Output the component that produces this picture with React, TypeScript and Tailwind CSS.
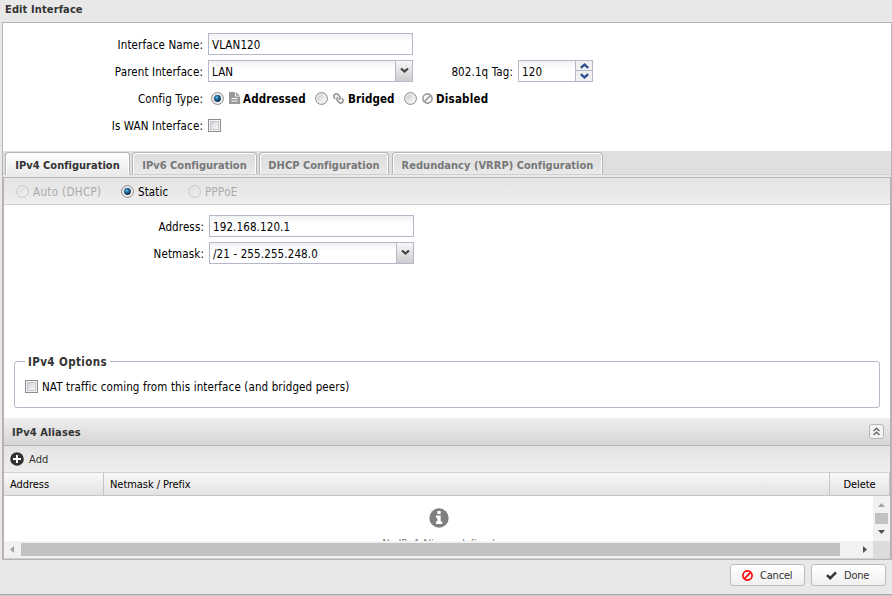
import type { ReactNode } from 'react';
import { FaLink } from 'react-icons/fa';

function Label({ children, width = 'w-[203px]' }: { children: ReactNode; width?: string }) {
  return <span className={`${width} shrink-0 pt-[2px] text-right whitespace-nowrap`}>{children}</span>;
}

function FileIcon() {
  return (
    <svg width="11" height="12" viewBox="0 0 11 12" className="mr-[3px] ml-[5px] shrink-0">
      <path d="M0 0H6V4.5H11V12H0Z" fill="#999" />
      <path d="M7 0 11 3.7H7Z" fill="#999" />
      <path d="M2.5 6.5H8.5M2.5 9H8.5" stroke="#fff" strokeWidth="1" />
    </svg>
  );
}

function BanIcon({ className }: { className: string }) {
  return (
    <svg width="11" height="11" viewBox="0 0 11 11" className={`shrink-0 ${className}`}>
      <circle cx="5.5" cy="5.5" r="4.6" fill="none" stroke="currentColor" strokeWidth="1.6" />
      <path d="M2.4 8.6 8.6 2.4" stroke="currentColor" strokeWidth="1.6" />
    </svg>
  );
}

function Radio({ checked, disabled }: { checked?: boolean; disabled?: boolean }) {
  return (
    <svg width="13" height="13" viewBox="0 0 13 13" className={`shrink-0 ${disabled ? 'opacity-35' : ''}`}>
      <defs>
        <linearGradient id="well" x1="0" y1="0" x2="1" y2="1">
          <stop offset="0" stopColor="#c4c8cc" />
          <stop offset="1" stopColor="#ffffff" />
        </linearGradient>
        <radialGradient id="dot" cx="0.4" cy="0.35" r="0.65">
          <stop offset="0" stopColor="#5fc4ee" />
          <stop offset="0.5" stopColor="#17608f" />
          <stop offset="1" stopColor="#0b2545" />
        </radialGradient>
      </defs>
      <circle cx="6.5" cy="6.5" r="5.9" fill="#f4f4f4" stroke="#858585" strokeWidth="1" />
      <circle cx="6.5" cy="6.5" r="4.3" fill="url(#well)" />
      {checked && <circle cx="6.5" cy="6.5" r="3.4" fill="url(#dot)" />}
    </svg>
  );
}

function Checkbox() {
  return (
    <span className="flex size-[13px] shrink-0 border border-[#8a8c8e] bg-[#f4f4f4] p-px">
      <span className="flex-1 border border-[#c5c8cd] bg-linear-to-br from-[#cfd2d8] to-[#f8f8f8]" />
    </span>
  );
}

function TextField({ value }: { value: string }) {
  return (
    <div className="flex h-[22px] w-[205px] items-center border border-[#b5b8c8] bg-linear-to-b from-[#f0f1f1] via-white via-40% to-white px-[3px] pt-[2px]">
      {value}
    </div>
  );
}

function ComboBox({ value }: { value: string }) {
  return (
    <div className="flex h-[22px] w-[205px] border border-[#b5b8c8] bg-linear-to-b from-[#f0f1f1] via-white via-40% to-white">
      <span className="flex flex-1 items-center px-[3px] pt-[2px]">{value}</span>
      <span className="flex w-[17px] justify-center border-l border-[#b5b8c8] bg-linear-to-b from-[#f8f8f8] to-[#cdcdcd] pt-[6px]">
        <svg width="9" height="7" viewBox="0 0 9 7">
          <path d="M1 1.5 4.5 4.5 8 1.5" fill="none" stroke="#444" strokeWidth="2.3" />
        </svg>
      </span>
    </div>
  );
}

function Spinner({ value }: { value: string }) {
  return (
    <div className="flex h-[22px] w-[75px] border border-[#b5b8c8] bg-linear-to-b from-[#f0f1f1] via-white via-40% to-white">
      <span className="flex flex-1 items-center px-[3px] pt-[2px]">{value}</span>
      <span className="flex w-[17px] flex-col border-l border-[#b5b8c8] bg-[#f0f0f0]">
        <span className="flex h-[10px] items-center justify-center border-b border-[#b5b8c8]">
          <svg width="9" height="6" viewBox="0 0 9 6">
            <path d="M0.8 4.8 4.5 1.6 8.2 4.8" fill="none" stroke="#2c4f8f" strokeWidth="2.3" />
          </svg>
        </span>
        <span className="flex h-[10px] items-center justify-center">
          <svg width="9" height="6" viewBox="0 0 9 6">
            <path d="M0.8 1.2 4.5 4.4 8.2 1.2" fill="none" stroke="#2c4f8f" strokeWidth="2.3" />
          </svg>
        </span>
      </span>
    </div>
  );
}

const tabs = [
  { name: 'IPv4 Configuration', style: 'w-[125px]' },
  { name: 'IPv6 Configuration', style: 'w-[125px]' },
  { name: 'DHCP Configuration', style: 'w-[130px]' },
  { name: 'Redundancy (VRRP) Configuration', style: 'ml-px w-[211px]' },
];

export default function App() {
  return (
    <div className="flex h-[596px] w-[892px] flex-col overflow-hidden bg-[#e8e8e8] font-['DejaVu_Sans_Condensed','DejaVu_Sans',sans-serif] text-[11.5px] leading-[14px] tracking-[0.12px] text-black [font-stretch:condensed]">
      <header className="h-[22px] shrink-0 pt-[3px] pl-[5px] text-[11px] font-bold text-[#333]">Edit Interface</header>

      <main className="ml-[2px] flex h-[538px] w-[890px] shrink-0 flex-col border border-[#bcb0b0] bg-white">
        {/* Interface settings */}
        <section className="-ml-[3px] flex h-[128px] shrink-0 flex-col gap-[5px] pt-[10px]">
          <div className="flex h-[22px] items-center gap-[5px]">
            <Label>Interface Name:</Label>
            <TextField value="VLAN120" />
          </div>
          <div className="flex h-[22px] items-center gap-[5px]">
            <Label>Parent Interface:</Label>
            <ComboBox value="LAN" />
            <Label width="ml-[32px] w-[63px]">802.1q Tag:</Label>
            <Spinner value="120" />
          </div>
          <div className="flex h-[22px] items-center">
            <Label>Config Type:</Label>
            <div className="flex items-center pl-[8px] font-bold">
              <span className="flex w-[104px] items-center">
                <Radio checked />
                <FileIcon />
                <span className="pt-[2px]">Addressed</span>
              </span>
              <span className="flex w-[89px] items-center">
                <Radio />
                <FaLink className="mr-[4px] ml-[5px] -scale-x-100 text-[11px] text-[#999]" />
                <span className="pt-[2px]">Bridged</span>
              </span>
              <span className="flex items-center">
                <Radio />
                <BanIcon className="mr-[3px] ml-[5px] text-[#999]" />
                <span className="pt-[2px] tracking-[0.2px]">Disabled</span>
              </span>
            </div>
          </div>
          <div className="flex h-[22px] items-center gap-[5px]">
            <Label>Is WAN Interface:</Label>
            <Checkbox />
          </div>
        </section>

        {/* Tab strip */}
        <nav className="flex h-[24px] shrink-0 items-end gap-[2px] border-b border-[#d0d0d0] bg-[#dfdfdf] pl-[2px] text-[11px] font-bold tracking-[0.02px]">
          {tabs.map((tab, i) => (
            <div
              key={tab.name}
              className={`flex shrink-0 justify-center rounded-t-[4px] border border-b-0 border-[#b5b5b5] pt-[6px] whitespace-nowrap shadow-[inset_1px_1px_0_#fff,inset_-1px_0_0_#fff] ${tab.style} ${
                i === 0
                  ? 'z-10 -mb-px h-[23px] bg-linear-to-b from-white to-[#eaeaea] text-[#333]'
                  : 'h-[22px] bg-linear-to-b from-[#dcdcdc] to-[#eaeaea] text-[#777]'
              }`}
            >
              {tab.name}
            </div>
          ))}
        </nav>
        <div className="h-[2px] shrink-0 bg-[#eaeaea]" />

        <div className="flex h-[382px] shrink-0 flex-col border border-[#bcb0b0] border-b-[#d0d0d0]">
          <div className="flex h-[27px] shrink-0 items-center border-b border-[#d0d0d0] bg-linear-to-b from-[#e4e4e4] to-[#eeeeee] pl-[12px] text-[#aaa]">
            <span className="flex w-[105px] items-center gap-[4px]">
              <Radio disabled />
              <span className="pt-[2px] tracking-[0.35px]">Auto (DHCP)</span>
            </span>
            <span className="flex w-[67px] items-center gap-[4px] text-black">
              <Radio checked />
              <span className="pt-[2px]">Static</span>
            </span>
            <span className="flex items-center gap-[4px]">
              <Radio disabled />
              <span className="pt-[2px] tracking-[0.3px]">PPPoE</span>
            </span>
          </div>

          <section className="flex h-[156px] shrink-0 flex-col gap-[5px] pt-[10px]">
            <div className="flex items-center gap-[5px]">
              <Label width="w-[200px]">Address:</Label>
              <TextField value="192.168.120.1" />
            </div>
            <div className="flex items-center gap-[5px]">
              <Label width="w-[200px]">Netmask:</Label>
              <ComboBox value="/21 - 255.255.248.0" />
            </div>
          </section>

          <fieldset className="ml-[10px] h-[47px] w-[866px] shrink-0 rounded-[3px] border border-[#b5b8c8]">
            <legend className="ml-[10px] h-0 px-[3px] font-bold tracking-[0.4px] text-[#333]">
              <span className="-mt-[7px] block bg-white">IPv4 Options</span>
            </legend>
            <div className="mt-[18px] ml-[10px] flex h-[13px] items-center gap-[4px]">
              <Checkbox />
              <span>NAT traffic coming from this interface (and bridged peers)</span>
            </div>
          </fieldset>

          {/* Aliases grid */}
          <div className="mt-[10px] flex h-[28px] shrink-0 items-center justify-between border-b border-[#bcb0b0] bg-linear-to-b from-[#eeeeee] to-[#d6d6d6] pr-[6px] pl-[8px] text-[11px] font-bold text-[#333]">
            <span className="pt-[2px]">IPv4 Aliases</span>
            <span className="flex size-[15px] items-center justify-center rounded-[3px] border border-[#b5b5b5] bg-[#f4f4f4]">
              <svg width="9" height="9" viewBox="0 0 9 9">
                <path d="M1.5 4 4.5 1.2 7.5 4M1.5 8 4.5 5.2 7.5 8" fill="none" stroke="#666" strokeWidth="1.4" />
              </svg>
            </span>
          </div>
          <div className="flex h-[27px] shrink-0 items-center gap-[5px] border-b border-[#d0d0d0] bg-linear-to-b from-[#e4e4e4] to-[#eeeeee] pl-[6px] text-[11px] text-[#333]">
            <svg width="14" height="14" viewBox="0 0 14 14">
              <circle cx="7" cy="7" r="6.8" fill="#333" />
              <path d="M7 3V11M3 7H11" stroke="#fff" strokeWidth="2" />
            </svg>
            <span className="pt-[2px]">Add</span>
          </div>
          <div className="flex h-[23px] shrink-0 items-center border-b border-[#c5c5c5] bg-linear-to-b from-[#f9f9f9] to-[#e3e1e1] text-[11px] tracking-[-0.05px]">
            <span className="flex h-full w-[100px] items-center border-r border-[#c5c5c5] pt-[2px] pl-[6px]">Address</span>
            <span className="flex h-full w-[726px] items-center border-r border-[#c5c5c5] pt-[2px] pl-[6px]">
              Netmask / Prefix
            </span>
            <span className="flex h-full flex-1 items-center justify-center border-r border-[#c5c5c5] pt-[2px]">Delete</span>
          </div>
          <div className="flex h-[45px] shrink-0">
            <div className="flex h-[45px] flex-1 flex-col items-center overflow-hidden pt-[12px] text-[11px] tracking-[-0.15px] text-[#808080]">
              <svg width="20" height="20" viewBox="0 0 20 20" className="shrink-0">
                <circle cx="10" cy="10" r="9.7" fill="#808080" />
                <path d="M8.4 3H11.7V6H8.4ZM7 7.6H11.7V13.6H13.2V16H7V13.6H8.4V10H7Z" fill="#fff" />
              </svg>
              <span className="mt-[9px] shrink-0">No IPv4 Aliases defined</span>
            </div>
            <div className="flex w-[17px] flex-col items-center bg-[#f1f1f1] pt-[7px]">
              <svg width="7" height="4" viewBox="0 0 7 4">
                <path d="M0 4 3.5 0 7 4Z" fill="#a3a3a3" />
              </svg>
              <span className="mt-[6px] h-[11px] w-[13px] bg-[#c1c1c1]" />
              <svg width="7" height="4" viewBox="0 0 7 4" className="mt-[6px]">
                <path d="M0 0 3.5 4 7 0Z" fill="#505050" />
              </svg>
            </div>
          </div>
          <div className="flex h-[17px] shrink-0 items-center bg-[#f1f1f1]">
            <svg width="4" height="7" viewBox="0 0 4 7" className="ml-[6px]">
              <path d="M4 0 0 3.5 4 7Z" fill="#a3a3a3" />
            </svg>
            <span className="ml-[7px] h-[13px] w-[819px] bg-[#c1c1c1]" />
            <svg width="4" height="7" viewBox="0 0 4 7" className="ml-[23px]">
              <path d="M0 0 4 3.5 0 7Z" fill="#505050" />
            </svg>
            <span className="ml-auto h-full w-[17px] bg-[#dcdcdc]" />
          </div>
        </div>
      </main>

      <footer className="flex h-[35px] shrink-0 justify-end gap-[6px] border-b border-[#aaa] pt-[4px] pr-[6px] text-[11px] tracking-[-0.2px] text-[#333]">
        <button className="flex h-[22px] w-[75px] items-center rounded-[3px] border border-[#bbb] bg-linear-to-b from-white to-[#f0f0f0] pl-[11px]">
          <BanIcon className="mr-[7px] text-[#f00]" />
          <span className="pt-[2px]">Cancel</span>
        </button>
        <button className="flex h-[22px] w-[75px] items-center rounded-[3px] border border-[#bbb] bg-linear-to-b from-white to-[#f0f0f0] pl-[14px]">
          <svg width="11" height="9" viewBox="0 0 11 9" className="mr-[7px]">
            <path d="M1 4.2 4.2 7.2 10 1.4" fill="none" stroke="#333" strokeWidth="2.5" />
          </svg>
          <span className="pt-[2px]">Done</span>
        </button>
      </footer>
      <div className="h-px bg-[#c8c8c8]" />
    </div>
  );
}
